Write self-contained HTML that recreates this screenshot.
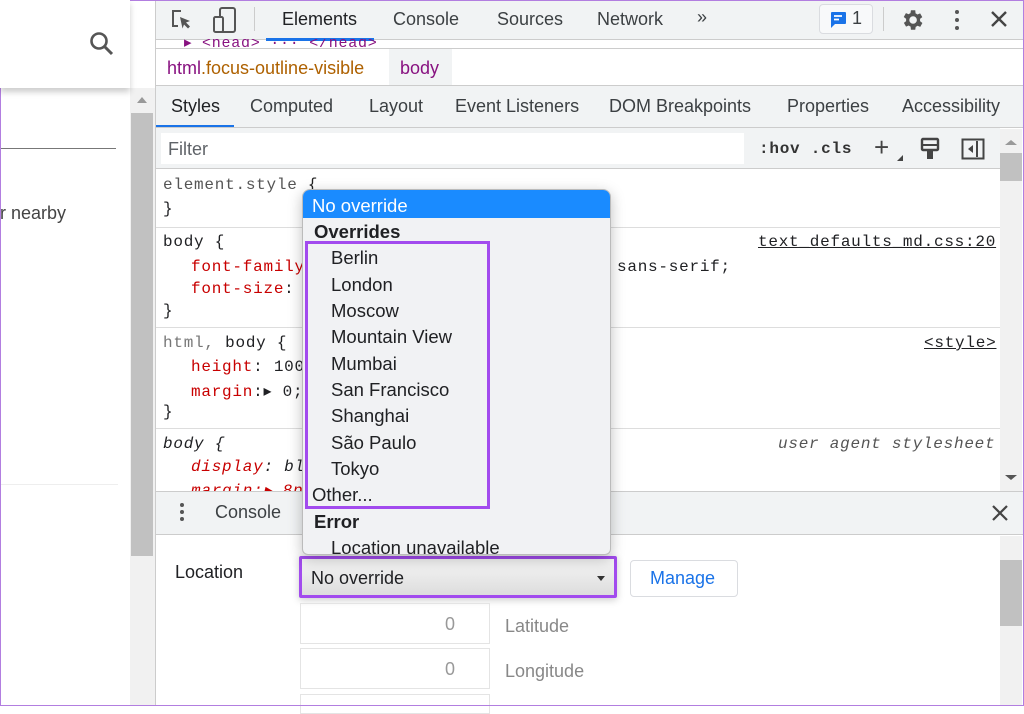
<!DOCTYPE html>
<html><head><meta charset="utf-8"><style>
*{box-sizing:border-box;margin:0;padding:0}
body{width:1024px;height:706px;overflow:hidden;position:relative;background:#fff;font-family:"Liberation Sans",sans-serif;color:#202124}
.a{position:absolute}
.mono{font-family:"Liberation Mono",monospace;font-size:16px;letter-spacing:0.75px;white-space:nowrap}
.t{font-size:18px;color:#3c4043;white-space:nowrap}
.red{color:#c80000}
.dd div{position:absolute;left:0;font-size:18.5px;white-space:nowrap;color:#202124}
</style></head><body>
<!-- left page -->
<div class="a" style="left:0;top:0;width:130px;height:88px;background:#fff;box-shadow:0 4px 6px rgba(0,0,0,.2);z-index:2"></div>
<svg class="a" style="left:88px;top:30px;z-index:3" width="28" height="28" viewBox="0 0 28 28"><circle cx="11" cy="11" r="7.5" fill="none" stroke="#555" stroke-width="2.6"/><path d="M16.5 16.5L24 24" stroke="#555" stroke-width="3"/></svg>
<div class="a" style="left:0;top:148px;width:116px;height:1px;background:#777"></div>
<div class="a t" style="left:0;top:203px;color:#444">r nearby</div>
<div class="a" style="left:0;top:484px;width:118px;height:1px;background:#eee"></div>
<div class="a" style="left:130px;top:88px;width:25px;height:618px;background:#f1f1f1"></div>
<div class="a" style="left:131px;top:113px;width:22px;height:443px;background:#c1c1c1"></div>
<div class="a" style="left:137px;top:97px;border:5px solid transparent;border-bottom:6px solid #999;border-top:0"></div>
<!-- devtools -->
<div class="a" style="left:155px;top:0;width:869px;height:706px;border-left:1px solid #ccc;background:#fff"></div>
<div class="a" style="left:156px;top:0;width:868px;height:40px;background:#f1f3f4;border-bottom:1px solid #ccc"></div>
<svg class="a" style="left:170px;top:8px" width="26" height="26" viewBox="0 0 26 26"><path d="M11 3H3v15h5" fill="none" stroke="#555" stroke-width="2"/><path d="M10 9l10 4-4 1.5 4 4-2 2-4-4-1.5 4z" fill="#555"/></svg>
<svg class="a" style="left:212px;top:6px" width="26" height="28" viewBox="0 0 26 28"><rect x="8" y="2" width="15" height="24" rx="2" fill="none" stroke="#555" stroke-width="2"/><rect x="2" y="11" width="9" height="15" rx="1.5" fill="#f1f3f4" stroke="#555" stroke-width="2"/></svg>
<div class="a" style="left:254px;top:7px;width:1px;height:24px;background:#ccc"></div>
<div class="a t" style="left:282px;top:9px;color:#202124">Elements</div>
<div class="a" style="left:266px;top:38px;width:108px;height:3px;background:#1a73e8"></div>
<div class="a t" style="left:393px;top:9px">Console</div>
<div class="a t" style="left:497px;top:9px">Sources</div>
<div class="a t" style="left:597px;top:9px">Network</div>
<div class="a t" style="left:697px;top:7px">»</div>
<div class="a" style="left:819px;top:4px;width:54px;height:30px;border:1px solid #dadce0;border-radius:4px;background:#f8f9fa"></div>
<svg class="a" style="left:828px;top:10px" width="20" height="20" viewBox="0 0 20 20"><path d="M3 2h14a1 1 0 0 1 1 1v10a1 1 0 0 1-1 1H7l-4 4V3a1 1 0 0 1 1-1z" fill="#1a73e8"/><path d="M6 6h8M6 9.5h5" stroke="#fff" stroke-width="1.8"/></svg>
<div class="a t" style="left:852px;top:8px">1</div>
<div class="a" style="left:883px;top:7px;width:1px;height:24px;background:#ccc"></div>
<svg class="a" style="left:899px;top:7px" width="26" height="26" viewBox="0 0 24 24"><path fill="#555" d="M19.4 13a7.5 7.5 0 0 0 0-2l2.1-1.6-2-3.5-2.5 1a7 7 0 0 0-1.7-1L15 3h-4l-.4 2.7a7 7 0 0 0-1.7 1l-2.5-1-2 3.5L6.6 11a7.5 7.5 0 0 0 0 2l-2.1 1.6 2 3.5 2.5-1a7 7 0 0 0 1.7 1L11 21h4l.4-2.7a7 7 0 0 0 1.7-1l2.5 1 2-3.5zM13 15.5a3.5 3.5 0 1 1 0-7 3.5 3.5 0 0 1 0 7z"/></svg>
<div class="a" style="left:955px;top:10px;width:4px;height:4px;border-radius:2px;background:#555;box-shadow:0 8px 0 #555,0 16px 0 #555"></div>
<svg class="a" style="left:990px;top:10px" width="18" height="18" viewBox="0 0 18 18"><path d="M2 2l14 14M16 2L2 16" stroke="#444" stroke-width="2.4"/></svg>
<div class="a mono" style="left:184px;top:33px;color:#881280;font-size:15px;clip-path:inset(6px 0 0 0)">▸ &lt;head&gt; ··· &lt;/head&gt;</div>
<div class="a" style="left:156px;top:48px;width:868px;height:1px;background:#ccc"></div>
<div class="a t" style="left:167px;top:58px;color:#881280">html<span style="color:#ae6100">.focus-outline-visible</span></div>
<div class="a" style="left:389px;top:49px;width:63px;height:36px;background:#f1f3f4"></div>
<div class="a t" style="left:400px;top:58px;color:#881280">body</div>
<div class="a" style="left:156px;top:85px;width:868px;height:43px;background:#f1f3f4;border-top:1px solid #ccc;border-bottom:1px solid #ccc"></div>
<div class="a t" style="left:171px;top:96px;color:#202124">Styles</div>
<div class="a" style="left:156px;top:125px;width:78px;height:2px;background:#1a73e8"></div>
<div class="a t" style="left:250px;top:96px">Computed</div>
<div class="a t" style="left:369px;top:96px">Layout</div>
<div class="a t" style="left:455px;top:96px">Event Listeners</div>
<div class="a t" style="left:609px;top:96px">DOM Breakpoints</div>
<div class="a t" style="left:787px;top:96px">Properties</div>
<div class="a t" style="left:902px;top:96px">Accessibility</div>
<div class="a" style="left:156px;top:128px;width:844px;height:41px;background:#f1f3f4;border-bottom:1px solid #ccc"></div>
<div class="a" style="left:161px;top:133px;width:583px;height:31px;background:#fff"></div>
<div class="a t" style="left:168px;top:139px;color:#5f6368">Filter</div>
<div class="a mono" style="left:759px;top:140px;color:#333;font-weight:bold">:hov .cls</div>
<div class="a" style="left:874px;top:132px;font-size:26px;color:#444">+</div>
<div class="a" style="left:897px;top:155px;border:3px solid transparent;border-right-color:#444;border-bottom-color:#444"></div>
<svg class="a" style="left:919px;top:137px" width="22" height="24" viewBox="0 0 22 24"><rect x="3" y="2" width="16" height="11" rx="1" fill="none" stroke="#444" stroke-width="2.4"/><path d="M3 8h16" stroke="#444" stroke-width="2"/><rect x="8" y="13" width="6" height="9" fill="#444"/></svg>
<svg class="a" style="left:961px;top:138px" width="24" height="22" viewBox="0 0 24 22"><rect x="1.5" y="1.5" width="21" height="19" fill="none" stroke="#444" stroke-width="2"/><path d="M16 3v16" stroke="#444" stroke-width="2"/><path d="M12 7v8l-5-4z" fill="#444"/></svg>
<!-- right scrollbar -->
<div class="a" style="left:1000px;top:129px;width:22px;height:362px;background:#f1f1f1"></div>
<div class="a" style="left:1000px;top:153px;width:22px;height:28px;background:#c1c1c1"></div>
<div class="a" style="left:1005px;top:140px;border:6px solid transparent;border-bottom:5px solid #999;border-top:0"></div>
<div class="a" style="left:1005px;top:475px;border:6px solid transparent;border-top:5px solid #555;border-bottom:0"></div>
<!-- styles -->
<div class="a mono" style="left:163px;top:176px;color:#555">element.style <span style="color:#222">{</span></div>
<div class="a mono" style="left:163px;top:200px">}</div>
<div class="a" style="left:156px;top:227px;width:844px;height:1px;background:#ddd"></div>
<div class="a mono" style="left:163px;top:233px">body {</div>
<div class="a mono" style="left:758px;top:233px;text-decoration:underline">text_defaults_md.css:20</div>
<div class="a mono red" style="left:191px;top:258px">font-family</div>
<div class="a mono" style="left:617px;top:258px">sans-serif;</div>
<div class="a mono" style="left:191px;top:280px"><span class="red">font-size</span>:</div>
<div class="a mono" style="left:163px;top:302px">}</div>
<div class="a" style="left:156px;top:327px;width:844px;height:1px;background:#ddd"></div>
<div class="a mono" style="left:163px;top:334px"><span style="color:#777">html,</span> body {</div>
<div class="a mono" style="left:924px;top:334px;text-decoration:underline">&lt;style&gt;</div>
<div class="a mono" style="left:191px;top:358px"><span class="red">height</span>: 100</div>
<div class="a mono" style="left:191px;top:381px"><span class="red">margin</span>:▸ 0;</div>
<div class="a mono" style="left:163px;top:403px">}</div>
<div class="a" style="left:156px;top:428px;width:844px;height:1px;background:#ddd"></div>
<div class="a mono" style="left:163px;top:435px;font-style:italic">body {</div>
<div class="a mono" style="left:778px;top:435px;font-style:italic;color:#555">user agent stylesheet</div>
<div class="a mono" style="left:191px;top:458px;font-style:italic"><span class="red">display</span>: bl</div>
<div class="a mono red" style="left:191px;top:480px;font-style:italic;clip-path:inset(0 0 8px 0)">margin:▸ 8p</div>
<!-- drawer -->
<div class="a" style="left:156px;top:491px;width:868px;height:44px;background:#f1f3f4;border-top:1px solid #ccc;border-bottom:1px solid #ccc"></div>
<div class="a" style="left:180px;top:503px;width:4px;height:4px;border-radius:2px;background:#555;box-shadow:0 7px 0 #555,0 14px 0 #555"></div>
<div class="a t" style="left:215px;top:502px">Console</div>
<svg class="a" style="left:992px;top:505px" width="16" height="16" viewBox="0 0 16 16"><path d="M1 1l14 14M15 1L1 15" stroke="#444" stroke-width="2.2"/></svg>
<div class="a" style="left:1000px;top:536px;width:22px;height:170px;background:#f1f1f1"></div>
<div class="a" style="left:1000px;top:560px;width:22px;height:66px;background:#c1c1c1"></div>
<div class="a t" style="left:175px;top:562px;color:#202124">Location</div>
<div class="a" style="left:299px;top:556px;width:318px;height:42px;background:linear-gradient(#f5f5f5,#ddd);border:3px solid #a24bee;border-radius:2px;box-shadow:0 2px 8px rgba(0,0,0,.2)"></div>
<div class="a t" style="left:311px;top:568px;color:#202124">No override</div>
<div class="a" style="left:597px;top:576px;border:4px solid transparent;border-top:5px solid #333;border-bottom:0"></div>
<div class="a" style="left:630px;top:560px;width:108px;height:37px;border:1px solid #dadce0;border-radius:4px;background:#fff"></div>
<div class="a t" style="left:650px;top:568px;color:#1a73e8">Manage</div>
<div class="a" style="left:300px;top:603px;width:190px;height:41px;border:1px solid #e4e4e4"></div>
<div class="a t" style="left:445px;top:614px;color:#999">0</div>
<div class="a t" style="left:505px;top:616px;color:#888">Latitude</div>
<div class="a" style="left:300px;top:648px;width:190px;height:41px;border:1px solid #e4e4e4"></div>
<div class="a t" style="left:445px;top:659px;color:#999">0</div>
<div class="a t" style="left:505px;top:661px;color:#888">Longitude</div>
<div class="a" style="left:300px;top:694px;width:190px;height:20px;border:1px solid #e4e4e4"></div>
<!-- dropdown -->
<div class="a dd" style="left:302px;top:189px;width:309px;height:366px;background:#f1f2f4;border:1px solid #bbb;border-radius:8px 8px 6px 6px;box-shadow:0 4px 14px rgba(0,0,0,.25);overflow:hidden">
<div style="top:0;left:0;width:309px;height:28px;background:#1a8bff"></div>
<div style="top:5px;left:9px;color:#fff">No override</div>
<div style="top:31px;left:11px;font-weight:bold">Overrides</div>
<div style="top:57px;left:28px">Berlin</div>
<div style="top:84px;left:28px">London</div>
<div style="top:110px;left:28px">Moscow</div>
<div style="top:136px;left:28px">Mountain View</div>
<div style="top:163px;left:28px">Mumbai</div>
<div style="top:189px;left:28px">San Francisco</div>
<div style="top:215px;left:28px">Shanghai</div>
<div style="top:242px;left:28px">São Paulo</div>
<div style="top:268px;left:28px">Tokyo</div>
<div style="top:294px;left:9px">Other...</div>
<div style="top:321px;left:11px;font-weight:bold">Error</div>
<div style="top:347px;left:28px">Location unavailable</div>
</div>
<div class="a" style="left:305px;top:241px;width:185px;height:268px;border:3px solid #a24bee"></div>
<!-- frame -->
<div class="a" style="left:0;top:0;width:1024px;height:706px;border:1px solid #b27ee0;pointer-events:none"></div>
</body></html>
